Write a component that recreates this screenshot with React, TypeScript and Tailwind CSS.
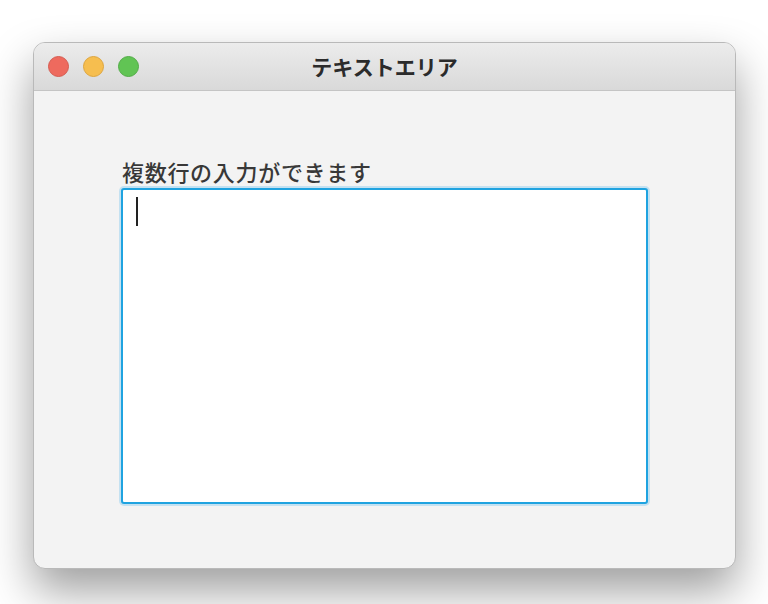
export default function App() {
  return (
    <div className="w-[768px] h-[604px] bg-white flex items-start justify-start overflow-hidden" style={{ fontFamily: '"Noto Sans CJK JP", "Noto Sans", sans-serif' }}>
      <div className="ml-[33px] mt-[42px] w-[703px] h-[527px] rounded-[12px] bg-[#f3f3f3] border border-[#b9b9b9] shadow-[0_22px_45px_rgba(0,0,0,0.38)] flex flex-col overflow-hidden">
        <div className="relative h-[48px] shrink-0 bg-gradient-to-b from-[#ececec] to-[#d9d9d9] border-b border-[#c4c4c4] flex items-center">
          <div className="flex items-center gap-[14px] pl-[14px]">
            <div className="w-[21px] h-[21px] rounded-full bg-[#ee6a5e] border border-[#d55b50]" />
            <div className="w-[21px] h-[21px] rounded-full bg-[#f6be4f] border border-[#dda53e]" />
            <div className="w-[21px] h-[21px] rounded-full bg-[#61c454] border border-[#52ac47]" />
          </div>
          <div className="absolute inset-0 flex items-center justify-center text-[21px] font-bold text-[#2b2b2b] tracking-[0px]">
            テキストエリア
          </div>
        </div>
        <div className="flex flex-col pl-[87px] pt-[65px]">
          <div className="text-[22px] leading-[30px] font-medium text-[#383838] pl-[1px] tracking-[0.7px]">複数行の入力ができます</div>
          <div className="mt-[2px] w-[527px] h-[316px] bg-white border-2 border-[#1fa3e0] rounded-[3px] shadow-[0_0_0_2px_rgba(140,205,240,0.45)] pl-[13px] pt-[7px]">
            <div className="w-[2px] h-[29px] bg-[#222222]" />
          </div>
        </div>
      </div>
    </div>
  );
}
